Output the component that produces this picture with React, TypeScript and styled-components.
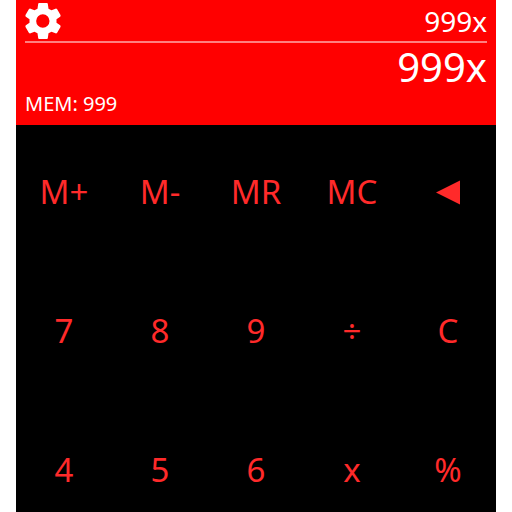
import React from "react";
import styled, { createGlobalStyle } from "styled-components";

const GlobalStyle = createGlobalStyle`
  * { box-sizing: border-box; }
  html, body, #root { height: 100%; }
  body { margin: 0; background: #fff; font-family: "Noto Sans", "Open Sans", sans-serif; }
`;

const Page = styled.div`
  min-height: 100%;
  padding: 0 16px;
  display: flex;
`;

const Calculator = styled.main`
  flex: 1;
  display: flex;
  flex-direction: column;
  background: #000;
`;

const Display = styled.header`
  display: flex;
  flex-direction: column;
  padding: 0 9px 8px;
  background: #f00;
  color: #fff;
`;

const TopLine = styled.div`
  display: flex;
  justify-content: space-between;
  align-items: center;
  height: 43px;
  border-bottom: 2px solid #ff8080;
`;

const SettingsButton = styled.button`
  display: flex;
  padding: 0;
  border: 0;
  background: none;
  color: inherit;
  cursor: pointer;
`;

const Expression = styled.output`
  font-size: 28px;
  line-height: 42px;
`;

const Result = styled.output`
  font-size: 40px;
  line-height: 48px;
  text-align: right;
`;

const Memory = styled.div`
  font-size: 20px;
  line-height: 26px;
`;

const Keypad = styled.div`
  flex: 1;
  display: grid;
  grid-template-columns: repeat(5, 1fr);
  grid-template-rows: 139px 139px minmax(109px, 1fr);
`;

const Key = styled.button`
  display: flex;
  align-items: flex-start;
  justify-content: center;
  padding: 44px 0 0;
  border: 0;
  background: none;
  color: #ff2a2a;
  font: 33px/46px "Noto Sans", "Open Sans", sans-serif;
  cursor: pointer;
`;

const keys = ["M+", "M-", "MR", "MC", "back", "7", "8", "9", "÷", "C", "4", "5", "6", "x", "%"];

const Gear = () => (
  <svg width="36" height="36" viewBox="15 8 107 108" fill="currentColor" aria-hidden="true">
    <path
      fillRule="evenodd"
      d="M57 8H80Q83 8 83 11L85 25L94 30L106 25Q109 24 111 27L121 44Q122 47 120 49L109 57V67L120 75Q122 77 121 80L111 97Q109 100 106 99L94 94L85 99L83 113Q83 116 80 116H57Q54 116 54 113L52 99L43 94L31 99Q28 100 26 97L16 80Q15 77 17 75L28 67V57L17 49Q15 47 16 44L26 27Q28 24 31 25L43 30L52 25L54 11Q54 8 57 8ZM68 42a20 20 0 1 0 0 40a20 20 0 1 0 0-40Z"
    />
  </svg>
);

const BackArrow = () => (
  <svg width="24" height="46" viewBox="0 0 24 46" fill="currentColor" aria-hidden="true">
    <path d="M0 23.5 24 11.5v24z" />
  </svg>
);

export default function App() {
  return (
    <>
      <GlobalStyle />
      <Page>
        <Calculator>
          <Display>
            <TopLine>
              <SettingsButton aria-label="Settings"><Gear /></SettingsButton>
              <Expression>999x</Expression>
            </TopLine>
            <Result>999x</Result>
            <Memory>MEM: 999</Memory>
          </Display>
          <Keypad>
            {keys.map((key) => (
              <Key key={key} aria-label={key === "back" ? "Backspace" : undefined}>
                {key === "back" ? <BackArrow /> : key}
              </Key>
            ))}
          </Keypad>
        </Calculator>
      </Page>
    </>
  );
}
